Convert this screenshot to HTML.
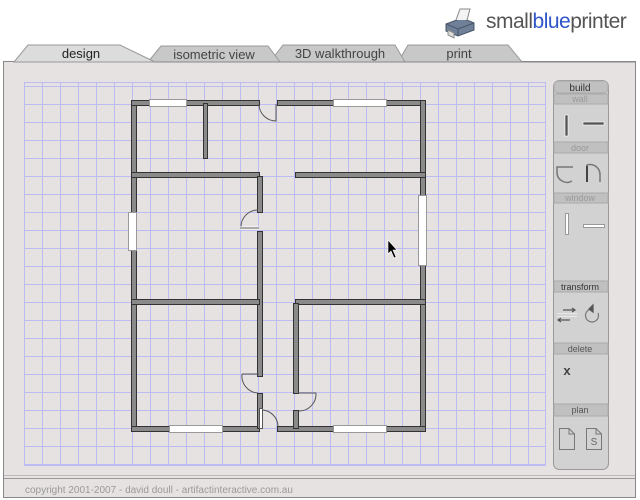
<!DOCTYPE html>
<html><head><meta charset="utf-8"><style>
html,body{margin:0;padding:0;background:#fff;width:640px;height:500px;overflow:hidden;font-family:"Liberation Sans",sans-serif}
</style></head><body>
<svg width="640" height="500" xmlns="http://www.w3.org/2000/svg" font-family="Liberation Sans, sans-serif">
<defs>
<pattern id="g" x="24" y="86" width="18" height="18" patternUnits="userSpaceOnUse">
<path d="M0.5 0V18M0 0.5H18" stroke="#bcbcf2" stroke-width="1" fill="none"/>
</pattern>
</defs>
<!-- logo -->
<g transform="translate(444,6)">
<path d="M2 18 L18 12 L30 17 L30 24 L14 30 L2 25 Z" fill="#6f8098" stroke="#4a5568"/>
<path d="M2 18 L14 23 L30 17" fill="none" stroke="#4a5568"/>
<path d="M14 23 L14 30" stroke="#4a5568"/>
<path d="M12 14 L16 3 L26 3 L23 14" fill="#f4f4f4" stroke="#888"/>
<path d="M4 24 L10 27 L10 32 L4 29Z" fill="#ddd" stroke="#888"/>
</g>
<text x="486" y="28" font-size="21" fill="#555" letter-spacing="-0.5">small<tspan fill="#2f55c8">blue</tspan>printer</text>
<!-- panel -->
<rect x="3.5" y="61.5" width="632" height="436" fill="#e6e2e2" stroke="#888"/>
<!-- tabs -->
<path d="M398 62 L408 45 L508 45 L522 62Z" fill="#c8c8c8" stroke="#999"/>
<text x="459" y="58" font-size="13" fill="#444" text-anchor="middle">print</text>
<path d="M270 62 L283 45 L395 45 L405 62Z" fill="#c8c8c8" stroke="#999"/>
<text x="340" y="58" font-size="13" fill="#444" text-anchor="middle">3D walkthrough</text>
<path d="M148 62 L161 46 L268 46 L280 62Z" fill="#c8c8c8" stroke="#999"/>
<text x="214" y="59" font-size="13" fill="#444" text-anchor="middle">isometric view</text>
<path d="M14 62 L28 45 L120 45 L155 62Z" fill="#dcdcdc" stroke="#999"/>
<text x="81" y="58" font-size="13" fill="#222" text-anchor="middle">design</text>
<line x1="155" y1="62" x2="636" y2="62" stroke="#888"/>
<!-- grid -->
<rect x="24" y="82" width="522" height="384" fill="url(#g)"/>
<rect x="24.5" y="82.5" width="521" height="383" fill="none" stroke="#bcbcf2"/>
<!-- footer -->
<line x1="4" y1="475.5" x2="635" y2="475.5" stroke="#bbb"/>
<line x1="4" y1="478.5" x2="635" y2="478.5" stroke="#999"/>
<text x="25" y="493" font-size="10" fill="#999">copyright 2001-2007 - david doull - artifactinteractive.com.au</text>
<!-- walls -->
<g fill="#8a8a8a" stroke="#333" stroke-width="1">
<rect x="131.5" y="100.5" width="5" height="331"/>
<rect x="131.5" y="100.5" width="128" height="5"/>
<rect x="277.5" y="100.5" width="148" height="5"/>
<rect x="420.5" y="100.5" width="5" height="331"/>
<rect x="131.5" y="426.5" width="128" height="5"/>
<rect x="277.5" y="426.5" width="148" height="5"/>
<rect x="203.5" y="103.5" width="4" height="55"/>
<rect x="131.5" y="172.5" width="128" height="5"/>
<rect x="295.5" y="172.5" width="130" height="5"/>
<rect x="257.5" y="176.5" width="5" height="36"/>
<rect x="257.5" y="231.5" width="5" height="145"/>
<rect x="257.5" y="393.5" width="5" height="35"/>
<rect x="131.5" y="299.5" width="128" height="5"/>
<rect x="295.5" y="299.5" width="130" height="5"/>
<rect x="293.5" y="303.5" width="5" height="90"/>
<rect x="293.5" y="410.5" width="5" height="18"/>
</g>
<!-- windows -->
<g fill="#fff" stroke="#999">
<rect x="149.5" y="99.5" width="37" height="7"/>
<rect x="333.5" y="99.5" width="53" height="7"/>
<rect x="128.5" y="212.5" width="8" height="38"/>
<rect x="418.5" y="195.5" width="8" height="70"/>
<rect x="169.5" y="425.5" width="53" height="7"/>
<rect x="333.5" y="425.5" width="53" height="7"/>
</g>
<!-- doors -->
<g fill="none" stroke="#555" stroke-width="1">
<path d="M259 104 A17 17 0 0 0 276 121 L276 104"/>
<path d="M241 228 A17 17 0 0 1 258 210"/><line x1="240" y1="228" x2="259" y2="228" stroke="#fff" stroke-width="3"/><line x1="240" y1="228" x2="259" y2="228"/>
<path d="M242 374 A17 17 0 0 0 258 393"/><line x1="242" y1="374" x2="259" y2="374"/>
<path d="M263 410 A17 17 0 0 1 278 426"/><rect x="259.5" y="408.5" width="3" height="20" fill="#fff"/>
<path d="M316 393 A17 17 0 0 1 299 411"/><line x1="298" y1="393" x2="316" y2="393"/>
</g>
<!-- cursor -->
<path d="M388 240 L388 254 L391 251 L394 258 L396 257 L393 250 L397 250 Z" fill="#000" stroke="#fff" stroke-width="0.6"/>
<!-- toolbar -->
<rect x="553.5" y="80.5" width="55" height="389" rx="6" fill="#d2d2d2" stroke="#999"/>
<g fill="#c0c0c0" stroke="#aaa">
<rect x="554" y="81" width="54" height="12" rx="4"/>
<rect x="554" y="94" width="54" height="10"/>
<rect x="554" y="142" width="54" height="11"/>
<rect x="554" y="193" width="54" height="10"/>
<rect x="554" y="281" width="54" height="11"/>
<rect x="554" y="343" width="54" height="11"/>
<rect x="554" y="404" width="54" height="12"/>
</g>
<g font-size="10" text-anchor="middle">
<text x="580" y="91" fill="#333">build</text>
<text x="580" y="102" fill="#999" font-size="9">wall</text>
<text x="580" y="151" fill="#999" font-size="9">door</text>
<text x="580" y="201" fill="#999" font-size="9">window</text>
<text x="580" y="290" fill="#333" font-size="9">transform</text>
<text x="580" y="352" fill="#555" font-size="9">delete</text>
<text x="580" y="413" fill="#555" font-size="9">plan</text>
</g>
<rect x="565" y="115" width="3" height="21" fill="#555" stroke="#fff" stroke-width="0.6"/>
<rect x="583" y="122" width="21" height="3" fill="#555" stroke="#fff" stroke-width="0.6"/>
<path d="M573 167 L557 167 L557 172 A10 10 0 0 0 572 181" fill="none" stroke="#777" stroke-width="1.5"/>
<path d="M587 182 L587 165 A10 10 0 0 1 600 175 L600 182" fill="none" stroke="#777" stroke-width="1.5"/>
<line x1="587" y1="166" x2="587" y2="182" stroke="#444" stroke-width="2"/>
<rect x="565.5" y="213.5" width="3" height="21" fill="#fff" stroke="#999"/>
<rect x="583.5" y="224.5" width="21" height="3" fill="#fff" stroke="#999"/>
<g stroke="#555" fill="none" stroke-width="1.2">
<path d="M563 310 H575 M572 308 L575 310 L572 312"/>
<path d="M557 315 H577" stroke="#fff" stroke-width="3"/>
<path d="M557 315 H577" stroke="#555" stroke-width="0.6"/>
<path d="M558 320 H570 M561 318 L558 320 L561 322"/>
<path d="M592 309 A6.5 6.5 0 1 0 598 313" stroke="#777"/>
<path d="M589 309 L593 305 L593 312Z" fill="#555"/>
</g>
<text x="567" y="375" font-size="13" font-weight="bold" fill="#444" text-anchor="middle">x</text>
<path d="M559.5 428.5 H569 L574.5 434 V449.5 H559.5Z M569 428.5 V434 H574.5" fill="none" stroke="#777"/>
<path d="M586.5 428.5 H596 L601.5 434 V449.5 H586.5Z M596 428.5 V434 H601.5" fill="none" stroke="#777"/>
<text x="594" y="445" font-size="10" fill="#666" text-anchor="middle">S</text>
</svg>
</body></html>
